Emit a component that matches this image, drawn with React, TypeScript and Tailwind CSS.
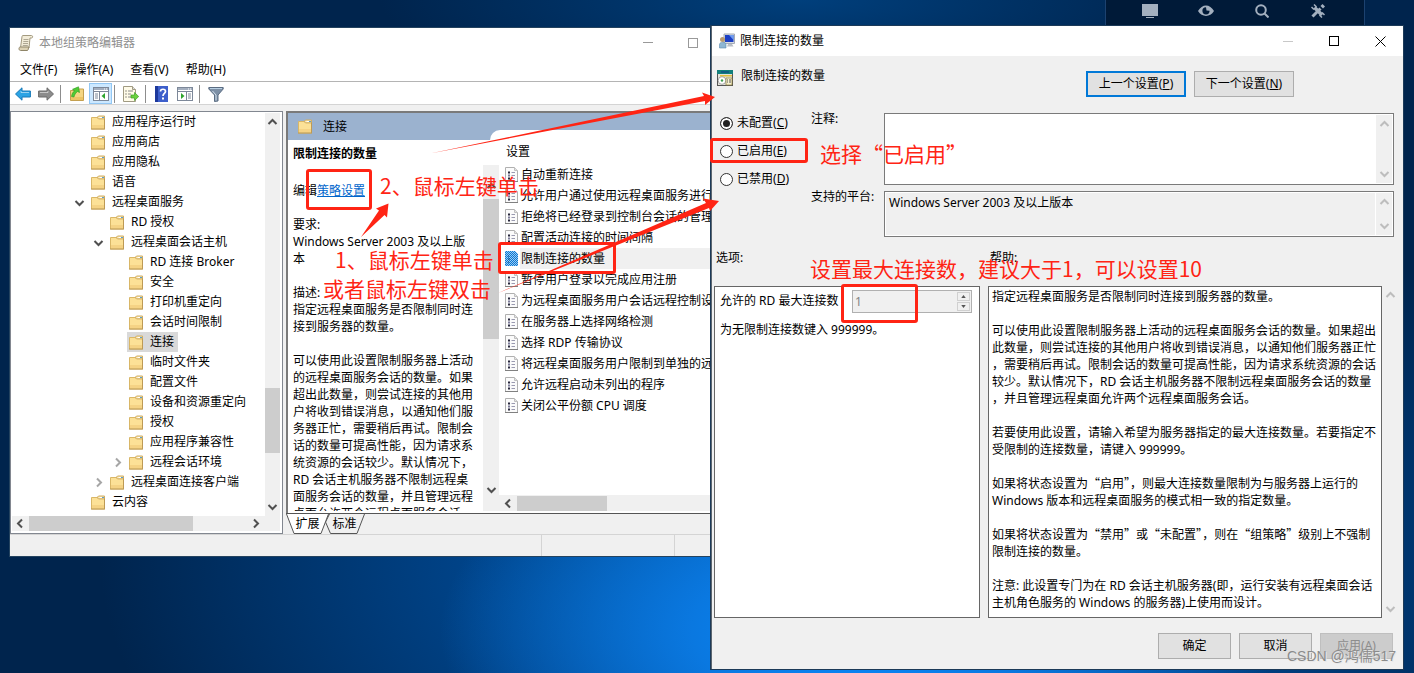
import type { ReactNode } from "react";
import clsx from "clsx";

type TreeNode = { name: string; level: 0 | 1 | 2; state?: "open" | "closed"; selected?: boolean };

const tree: TreeNode[] = [
  { name: "应用程序运行时", level: 0 },
  { name: "应用商店", level: 0 },
  { name: "应用隐私", level: 0 },
  { name: "语音", level: 0 },
  { name: "远程桌面服务", level: 0, state: "open" },
  { name: "RD 授权", level: 1 },
  { name: "远程桌面会话主机", level: 1, state: "open" },
  { name: "RD 连接 Broker", level: 2 },
  { name: "安全", level: 2 },
  { name: "打印机重定向", level: 2 },
  { name: "会话时间限制", level: 2 },
  { name: "连接", level: 2, selected: true },
  { name: "临时文件夹", level: 2 },
  { name: "配置文件", level: 2 },
  { name: "设备和资源重定向", level: 2 },
  { name: "授权", level: 2 },
  { name: "应用程序兼容性", level: 2 },
  { name: "远程会话环境", level: 2, state: "closed" },
  { name: "远程桌面连接客户端", level: 1, state: "closed" },
  { name: "云内容", level: 0 },
];

const indent = { 0: "pl-[60px]", 1: "pl-[79px]", 2: "pl-[98px]" };

const policies = [
  "自动重新连接",
  "允许用户通过使用远程桌面服务进行远程连接",
  "拒绝将已经登录到控制台会话的管理员注销",
  "配置活动连接的时间间隔",
  "限制连接的数量",
  "暂停用户登录以完成应用注册",
  "为远程桌面服务用户会话远程控制设置规则",
  "在服务器上选择网络检测",
  "选择 RDP 传输协议",
  "将远程桌面服务用户限制到单独的远程桌面服务会话",
  "允许远程启动未列出的程序",
  "关闭公平份额 CPU 调度",
];

const description = `要求:
Windows Server 2003 及以上版
本

描述:
指定远程桌面服务是否限制同时连
接到服务器的数量。

可以使用此设置限制服务器上活动
的远程桌面服务会话的数量。如果
超出此数量，则尝试连接的其他用
户将收到错误消息，以通知他们服
务器正忙，需要稍后再试。限制会
话的数量可提高性能，因为请求系
统资源的会话较少。默认情况下，
RD 会话主机服务器不限制远程桌
面服务会话的数量，并且管理远程
桌面允许两个远程桌面服务会话。`;

const help = `指定远程桌面服务是否限制同时连接到服务器的数量。

可以使用此设置限制服务器上活动的远程桌面服务会话的数量。如果超出
此数量，则尝试连接的其他用户将收到错误消息，以通知他们服务器正忙
，需要稍后再试。限制会话的数量可提高性能，因为请求系统资源的会话
较少。默认情况下，RD 会话主机服务器不限制远程桌面服务会话的数量
，并且管理远程桌面允许两个远程桌面服务会话。

若要使用此设置，请输入希望为服务器指定的最大连接数量。若要指定不
受限制的连接数量，请键入 999999。

如果将状态设置为“启用”，则最大连接数量限制为与服务器上运行的
Windows 版本和远程桌面服务的模式相一致的指定数量。

如果将状态设置为“禁用”或“未配置”，则在“组策略”级别上不强制
限制连接的数量。

注意: 此设置专门为在 RD 会话主机服务器(即，运行安装有远程桌面会话
主机角色服务的 Windows 的服务器)上使用而设计。`;

// Chinese quotes have to come from the CJK font, the latin one draws them too narrow
function Quoted({ text }: { text: string }) {
  return (
    <>
      {text.split(/([“”])/).map((part, i) =>
        part === "“" || part === "”" ? (
          <span key={i} className="font-['Noto_Sans_CJK_SC',sans-serif] leading-none">{part}</span>
        ) : part
      )}
    </>
  );
}

const arrowPaths = { up: "M1.5 7 5.5 3 9.5 7", down: "M1.5 4 5.5 8 9.5 4", left: "M7 1.5 3 5.5 7 9.5", right: "M4 1.5 8 5.5 4 9.5" };

function Arrow({ dir, className = "text-[#505050]" }: { dir: keyof typeof arrowPaths; className?: string }) {
  return (
    <svg viewBox="0 0 11 11" className={clsx("size-[11px] shrink-0", className)} fill="none" stroke="currentColor" strokeWidth="2">
      <path d={arrowPaths[dir]} />
    </svg>
  );
}

function Folder() {
  return (
    <svg viewBox="0 0 15 15" className="h-[15px] w-[15px] shrink-0">
      <path d="M6.500 4V2L7.500 1h6v3z" fill="#f7e3ae" stroke="#d0ad62" />
      <path d="M8.500 2.500h2.500" stroke="#fff" />
      <path d="M11 2.500h2" stroke="#5d9fc9" />
      <path d="M.5 2.500h5.500l1.500 1.500h6v10H.5z" fill="#fce197" stroke="#d9b768" />
      <path d="M1 10h12v3.500H1z" fill="#f5d385" />
      <path d="M13.500 3.500v10.500M0 14h14" stroke="#bd9a55" />
    </svg>
  );
}

function PolicyIcon({ selected }: { selected?: boolean }) {
  if (selected) {
    return (
      <svg viewBox="0 0 13 15" className="h-[15px] w-[13px] shrink-0">
        <defs>
          <pattern id="dither" width="2" height="2" patternUnits="userSpaceOnUse">
            <rect width="2" height="2" fill="#0878d6" />
            <rect width="1" height="1" fill="#9ecbf0" />
            <rect x="1" y="1" width="1" height="1" fill="#9ecbf0" />
          </pattern>
        </defs>
        <path d="M0 0h10l3 3v12H0z" fill="url(#dither)" />
        <path d="M3 5h1M3 8h2M3 11h1" stroke="#124a80" />
      </svg>
    );
  }
  return (
    <svg viewBox="0 0 13 15" className="h-[15px] w-[13px] shrink-0">
      <path d="M.5.5h9l3 3v11H.5z" fill="#fbfbfb" stroke="#b0b0b0" />
      <path d="M9.500.5v3h3" fill="#e4e4e4" stroke="#c0c0c0" />
      <path d="M0 14.500h13" stroke="#808080" />
      <path d="M3 5.500h2M3 11.500h2" stroke="#26263c" strokeWidth="2" />
      <path d="M3 8.500h2" stroke="#7a7a98" strokeWidth="2" />
      <path d="M6.500 5.500H10M6.500 8.500H10M6.500 11.500H10" stroke="#9a9ab0" />
    </svg>
  );
}

function ToolArrow({ flip, fill, edge }: { flip?: boolean; fill: string; edge: string }) {
  return (
    <svg viewBox="0 0 16 14" className="h-3.5 w-4 shrink-0">
      <path d={flip ? "M15.500 7 9 .8V4H.6v6H9v3.200z" : "M.5 7 7 .8V4h8.400v6H7v3.200z"} fill={fill} stroke={edge} />
      <path d={flip ? "M2 5.500h8V4" : "M14 5.500H6V4"} fill="none" stroke="#fff" strokeOpacity=".5" />
    </svg>
  );
}

function PaneIcon({ right }: { right?: boolean }) {
  return (
    <svg viewBox="0 0 16 14" className="h-3.5 w-4">
      <rect x=".5" y=".5" width="15" height="13" fill="#fff" stroke="#7d8899" />
      <path d="M1 2h14" stroke="#a4afbf" strokeWidth="2" />
      <path d="M11 2h1m1 0h1" stroke="#fff" />
      <path d="M1 4.500h14" stroke="#7d8899" />
      {right ? (
        <>
          <path d="M9.500 5v8" stroke="#7d8899" />
          <path d="M11 7h3M11 9h3M11 11h3" stroke="#7d8899" />
          <path d="M4 6 7.500 9 4 12z" fill="#2fa52d" />
        </>
      ) : (
        <>
          <path d="M6.500 5v8" stroke="#7d8899" />
          <path d="M2 7h3M2 9h3M2 11h3" stroke="#7d8899" />
          <path d="M12 6 8.500 9l3.500 3z" fill="#2fa52d" />
        </>
      )}
    </svg>
  );
}

function Toolbar() {
  const sep = <span className="h-[18px] w-px bg-[#8d8d8d]" />;
  return (
    <div className="flex h-[23px] items-center border-b border-[#d4d4d4] pl-[5px] pt-px">
      <button aria-label="后退"><ToolArrow fill="#2ba3e4" edge="#1779b8" /></button>
      <button aria-label="前进" className="ml-[7px] mr-1.5"><ToolArrow flip fill="#8c8c8c" edge="#6b6b6b" /></button>
      {sep}
      <button aria-label="上一级" className="ml-2">
        <svg viewBox="0 0 16 16" className="size-4">
          <path d="M1.500 4.500h6L9 3h5.500v11.500h-13z" fill="#f5d683" stroke="#c4a050" />
          <path d="M2 11h12v3H2z" fill="#edc566" />
          <path d="M2.500 10.500C3 7.500 4 6 5.500 4.800L3.500 3.300 9.500.8 10.500 6.500 8.500 5.500C7 7 5.500 8 5 11z" fill="#4fcb35" stroke="#2b9a1e" strokeWidth=".6" />
        </svg>
      </button>
      <button aria-label="显示控制台树" className="ml-1 mr-0.5 flex h-[21px] w-[23px] items-center justify-center border border-[#92c7f4] bg-[#cce8ff]"><PaneIcon /></button>
      {sep}
      <button aria-label="导出列表" className="ml-2 mr-1.5">
        <svg viewBox="0 0 16 16" className="size-4">
          <path d="M.5.5h9l3 3v12H.5z" fill="#fffbe8" stroke="#a09a82" />
          <path d="M9.500.5v3h3" fill="#ddd" stroke="#a09a82" />
          <path d="M2.500 5h1m-1 3h1m-1 3h1" stroke="#333" />
          <path d="M5 5h5M5 8h3M5 11h3" stroke="#8a8a8a" />
          <path d="M8 9h3.500V6.500l4.200 4-4.200 4V12H8z" fill="#6bd13f" stroke="#3da326" strokeWidth=".7" />
        </svg>
      </button>
      {sep}
      <button aria-label="帮助" className="ml-2 mr-[7px]">
        <svg viewBox="0 0 16 16" className="size-4">
          <path d="M1 0h13v16H1z" fill="#3d5fcb" />
          <path d="M1 0h3v16H1z" fill="#1d389b" />
          <path d="M6.500 5.500C6.500 2.500 11.500 2.500 11.500 5.500 11.500 7.500 9 7.500 9 10" fill="none" stroke="#fff" strokeWidth="1.700" />
          <path d="M8 11.500h2v2H8z" fill="#fff" />
        </svg>
      </button>
      <button aria-label="显示操作窗格" className="mr-1.5"><PaneIcon right /></button>
      {sep}
      <button aria-label="筛选器" className="ml-2">
        <svg viewBox="0 0 16 16" className="size-4">
          <path d="M.8 1.500h14.400v1.500L10 9v6l-3.500.5V9L.8 3z" fill="#7d90a6" stroke="#5a6c82" />
          <path d="M2 2.500h12" stroke="#b9d0e4" />
          <path d="M4.500 5 8 9v5.500" fill="none" stroke="#d5e2ee" />
        </svg>
      </button>
    </div>
  );
}

function ConsoleTree() {
  return (
    <div className="flex w-[273px] flex-col border border-[#828790] bg-white">
      <div className="flex flex-1">
        <ul className="flex-1">
          {tree.map(n => (
            <li key={n.name} className={clsx("flex h-5 items-center whitespace-nowrap", indent[n.level])}>
              <span className="mr-0.5 flex w-4 justify-center">
                {n.state === "open" && <Arrow dir="down" />}
                {n.state === "closed" && <Arrow dir="right" className="text-[#a6a6a6]" />}
              </span>
              <span className={clsx("flex h-5 items-center gap-1.5 pl-0.5 pr-1", n.selected && "bg-[#d9d9d9]")}>
                <Folder />
                <span className="leading-[18px]">{n.name}</span>
              </span>
            </li>
          ))}
        </ul>
        <div className="mr-0.5 mt-px flex w-[15px] flex-col items-center bg-[#f0f0f0]">
          <Arrow dir="up" className="mt-1 text-[#505050]" />
          <span className="mt-[260px] h-[65px] w-full bg-[#cdcdcd]" />
          <Arrow dir="down" className="mb-1 mt-auto text-[#505050]" />
        </div>
      </div>
      <div className="mb-0.5 mr-0.5 ml-px flex h-[15px] items-center bg-[#f0f0f0] pl-[3px]">
        <Arrow dir="left" />
        <span className="ml-[3px] h-[15px] w-[164px] bg-[#cdcdcd]" />
        <Arrow dir="right" className="ml-auto mr-[19px] text-[#505050]" />
      </div>
    </div>
  );
}

function ExtendedView() {
  return (
    <div className="flex h-[402px] flex-col border-l-2 border-t-2 border-[#7a7a7a] bg-white pb-0.5">
      <div className="flex h-[27px] bg-[#9bb2cf]">
        <div className="flex w-[202px] items-center gap-2.5 pl-2.5">
          <Folder />
          连接
        </div>
        <span className="h-2.5 flex-1 self-end rounded-tl-[10px] bg-white" />
      </div>
      <div className="flex min-h-0 flex-1">
        <div className="flex w-[211px] flex-col">
          <h2 className="h-[25px] pl-[5px] font-bold leading-[27px]">限制连接的数量</h2>
          <div className="flex min-h-0 flex-1">
            <div className="flex-1 overflow-hidden whitespace-pre pl-[5px] pt-[17px] leading-[17px]">
              <p className="mb-[17px]">编辑<a href="#policy" className="text-[#0066cc] underline">策略设置</a></p>
              <p>{description}</p>
            </div>
            <div className="flex w-4 flex-col items-center bg-[#f0f0f0]">
              <Arrow dir="up" className="mt-4 text-[#505050]" />
              <span className="mt-[7px] h-[140px] w-full bg-[#cdcdcd]" />
              <Arrow dir="down" className="mb-4 mt-auto text-[#505050]" />
            </div>
          </div>
        </div>
        <div className="flex min-w-0 flex-1 flex-col">
          <h3 className="h-6 pl-[7px] leading-6">设置</h3>
          <ul className="flex-1 whitespace-nowrap">
            {policies.map((p, i) => (
              <li key={p} className="flex h-[21px] items-center gap-0.5 pl-1.5">
                <PolicyIcon selected={i === 4} />
                <span className={clsx("h-[21px] flex-1 overflow-hidden pl-px leading-[21px]", i === 4 && "bg-[#f0f0f0]")}>{p}</span>
              </li>
            ))}
          </ul>
          <div className="flex h-4 items-center bg-[#f0f0f0] pl-1">
            <Arrow dir="left" />
            <span className="ml-[3px] h-[15px] w-[90px] bg-[#cdcdcd]" />
          </div>
        </div>
      </div>
    </div>
  );
}

function ViewTab({ label, active }: { label: string; active?: boolean }) {
  return (
    <button className={clsx("relative h-5 w-[43px] leading-5", active ? "z-10" : "-ml-1.5")}>
      <svg viewBox="0 0 43 20" className="absolute inset-0 h-5 w-[43px]">
        <path d={active ? "M.5 0 8 19.500H35L42.500 0" : "M6.500 0 2.500 8 7.500 19.500H34L41.500 0"} fill={active ? "#fff" : "#f0f0f0"} stroke="#555" />
      </svg>
      <span className="relative">{label}</span>
    </button>
  );
}

function EditorWindow() {
  return (
    <section className="absolute left-[10px] top-7 w-[750px] bg-[#f0f0f0] ring-1 ring-[#24435f]">
      <div className="bg-white">
        <header className="flex h-[29px] items-center pl-2">
          <svg viewBox="0 0 16 16" className="size-4">
            <path d="M4 1.500C4 .8 4.500.5 5 .5h8.500c1.500 0 1.500 2.500 0 2.500H12L11 13H2.500z" fill="#f2ecd8" stroke="#a39a80" />
            <path d="M1 13.500C1 12 2 12 3 12h8c-1 1.500-.5 3-1.500 3.500H2.500C1.500 15.500 1 14.800 1 13.500z" fill="#ddd2b4" stroke="#8f8568" />
            <path d="M5.500 4.500h5M5.300 6.500h5M5 8.500h5M4.800 10.500h5" stroke="#9c9681" strokeWidth=".8" />
          </svg>
          <h1 className="ml-[5px] flex-1 text-[#8f8f8f]">本地组策略编辑器</h1>
          <button aria-label="最小化" className="flex w-[45px] justify-center"><span className="h-px w-2.5 bg-[#999]" /></button>
          <button aria-label="最大化" className="flex w-[45px] justify-center"><span className="size-2.5 border border-[#999]" /></button>
          <button aria-label="关闭" className="flex w-[45px] justify-center text-[#999]">✕</button>
        </header>
        <nav className="flex h-[25px] items-center gap-[17px] border-b border-[#b4b4b4] pl-2.5 pt-0.5">
          {["文件(F)", "操作(A)", "查看(V)", "帮助(H)"].map(m => <button key={m}>{m}</button>)}
        </nav>
        <Toolbar />
      </div>
      <div className="mt-1.5 flex h-[423px] gap-[3px]">
        <ConsoleTree />
        <div className="flex min-w-0 flex-1 flex-col">
          <ExtendedView />
          <div className="flex border-t border-[#555]">
            <ViewTab label="扩展" active />
            <ViewTab label="标准" />
          </div>
        </div>
      </div>
      <footer className="flex h-[22px] border-t border-[#d4d4d4]">
        <span className="w-[532px] border-r border-[#d4d4d4]" />
        <span className="w-[133px] border-r border-[#d4d4d4]" />
      </footer>
    </section>
  );
}

function SideScroll({ className }: { className?: string }) {
  return (
    <div className={clsx("flex w-4 shrink-0 flex-col items-center justify-between bg-[#f0f0f0] py-1", className)}>
      <Arrow dir="up" className="text-[#bdbdbd]" />
      <Arrow dir="down" className="text-[#bdbdbd]" />
    </div>
  );
}

function StateRadio({ label, hotkey, checked }: { label: string; hotkey: string; checked?: boolean }) {
  return (
    <label className="flex h-5 items-center gap-1">
      <input type="radio" name="state" defaultChecked={checked} className="size-[13px] appearance-none rounded-full border border-[#333] bg-white checked:bg-[#222] checked:shadow-[inset_0_0_0_2px_#fff]" />
      <span className="leading-[18px]">{label}(<u>{hotkey}</u>)</span>
    </label>
  );
}

function DialogButton({ children, className = "w-[73px] border border-[#adadad] bg-[#e1e1e1]", disabled }: { children: ReactNode; className?: string; disabled?: boolean }) {
  return <button disabled={disabled} className={clsx("h-[26px]", className)}>{children}</button>;
}

function PolicyDialog() {
  return (
    <section className="absolute left-[711px] top-[26px] w-[692px] border-l border-[#5c6670] bg-[#f0f0f0] ring-1 ring-[#1c3a58]">
      <header className="flex h-[30px] items-center bg-white pl-[7px]">
        <svg viewBox="0 0 16 16" className="size-4">
          <path d="M5 1h10.500v9.500H5z" fill="#d9dde3" stroke="#a5abb5" />
          <path d="M6 2h8.500v7H6z" fill="#1c3fc4" />
          <path d="M10 2h4.500v5z" fill="#6f9cf0" />
          <path d="M9 11h4l1.500 2.500H8z" fill="#b9bec6" />
          <circle cx="3.500" cy="6.500" r="2.500" fill="#b99a70" />
          <path d="M.5 15V11.500C.5 8.500 7 8.500 7 11.500V15z" fill="#8eb6d3" stroke="#5d8cae" strokeWidth=".6" />
        </svg>
        <h1 className="ml-[5px] flex-1">限制连接的数量</h1>
        <button aria-label="最小化" className="flex w-[46px] justify-center"><span className="h-px w-2.5 bg-[#c8c8c8]" /></button>
        <button aria-label="最大化" className="flex w-[46px] justify-center"><span className="size-2.5 border border-black" /></button>
        <button aria-label="关闭" className="flex w-[46px] justify-center">
          <svg viewBox="0 0 11 11" className="size-[11px]" stroke="#000"><path d="M.5.5l10 10M10.500.5l-10 10" /></svg>
        </button>
      </header>

      <div className="flex h-[57px] items-start pl-[5px]">
        <svg viewBox="0 0 16 16" className="mt-3.5 size-4">
          <rect x=".5" y=".5" width="15" height="15" fill="#e3e3da" stroke="#555" />
          <path d="M0 0h16v4H0z" fill="#11807c" />
          <path d="M4 2h8" stroke="#123c8c" />
          <path d="M3 5h12v1.500H3z" fill="#e0bf3c" />
          <circle cx="5" cy="10.500" r="3.800" fill="#fff" stroke="#888" strokeWidth=".7" />
          <circle cx="5" cy="10.500" r="1.200" fill="#3f9e50" />
          <path d="M9 8h6v7H9z" fill="#f7f1cf" stroke="#8b7c3a" strokeWidth=".7" />
          <path d="M10 10h1m1 0h2m-4 2h1m1 0h2" stroke="#555" />
        </svg>
        <h2 className="ml-2 mt-3 flex-1 leading-4">限制连接的数量</h2>
        <div className="mr-[109px] mt-[15px] flex gap-2">
          <DialogButton className="w-[100px] border-2 border-[#0078d7] bg-[#e1e1e1]">上一个设置(<u>P</u>)</DialogButton>
          <DialogButton className="w-[100px] border border-[#adadad] bg-[#e1e1e1]">下一个设置(<u>N</u>)</DialogButton>
        </div>
      </div>

      <div className="grid grid-cols-[99px_73px_1fr] grid-rows-[72px_46px] gap-y-1.5 pr-[9px]">
        <fieldset className="row-span-2 flex flex-col gap-2 pl-2">
          <StateRadio label="未配置" hotkey="C" checked />
          <StateRadio label="已启用" hotkey="E" />
          <StateRadio label="已禁用" hotkey="D" />
        </fieldset>
        <label htmlFor="comment" className="leading-3">注释:</label>
        <div className="flex border border-[#7a7a7a] bg-white p-px">
          <textarea id="comment" className="min-w-0 flex-1 resize-none outline-none" />
          <SideScroll />
        </div>
        <label htmlFor="platform" className="leading-3">支持的平台:</label>
        <div className="flex border border-[#7a7a7a] bg-white p-px">
          <textarea id="platform" readOnly defaultValue="Windows Server 2003 及以上版本" className="mr-px min-w-0 flex-1 resize-none overflow-hidden bg-[#f0f0f0] pl-[3px] pt-px leading-[17px] outline-none" />
          <SideScroll />
        </div>
      </div>

      <div className="flex h-[49px] pl-1 pt-[13px] leading-4">
        <h3 className="w-[274px]">选项:</h3>
        <h3>帮助:</h3>
      </div>

      <div className="flex h-[332px] pl-0.5 pr-[5px]">
        <div className="w-[266px] border border-[#666] bg-white pl-[5px] pt-[3px]">
          <div className="flex items-center">
            <label htmlFor="limit" className="w-[132px] whitespace-nowrap pb-0.5">允许的 RD 最大连接数</label>
            <div className="flex h-[23px] w-[120px] border border-[#b0b0b0] bg-[#f0f0f0]">
              <input id="limit" disabled defaultValue="1" className="min-w-0 flex-1 pl-0.5 text-[#858585]" />
              <span className="m-px flex w-[13px] flex-col gap-px text-[#555]">
                <button aria-label="增加" disabled className="flex flex-1 items-center justify-center border border-[#d0d0d0]">
                  <svg viewBox="0 0 6 4" className="h-[3px] w-[5px]" fill="currentColor"><path d="M3 0 6 4H0z" /></svg>
                </button>
                <button aria-label="减少" disabled className="flex flex-1 items-center justify-center border border-[#d0d0d0]">
                  <svg viewBox="0 0 6 4" className="h-[3px] w-[5px]" fill="currentColor"><path d="M3 4 0 0h6z" /></svg>
                </button>
              </span>
            </div>
          </div>
          <p className="mt-2 leading-[17px]">为无限制连接数键入 999999。</p>
        </div>
        <div className="ml-2 flex-1 overflow-hidden whitespace-pre border border-[#666] bg-white pl-[3px] pt-px leading-[17px]">
          <Quoted text={help} />
        </div>
        <SideScroll />
      </div>

      <footer className="flex justify-end gap-2 pb-2.5 pr-2.5 pt-[15px]">
        <DialogButton>确定</DialogButton>
        <DialogButton>取消</DialogButton>
        <DialogButton disabled className="w-[73px] border border-[#bfbfbf] bg-[#cccccc] text-[#8d8d8d]">应用(A)</DialogButton>
      </footer>
    </section>
  );
}

function Marks() {
  const note = "absolute whitespace-nowrap text-[21px] leading-[26px]";
  const box = "absolute rounded-[3px] border-3";
  return (
    <div className="pointer-events-none absolute inset-0 border-[#ff2414] font-['Noto_Sans_CJK_SC',sans-serif] text-[#ff2414]">
      <span className={clsx(box, "left-[306px] top-[169px] h-[41px] w-[66px]")} />
      <span className={clsx(box, "left-[498px] top-[242px] h-[32px] w-[118px]")} />
      <span className={clsx(box, "left-[710px] top-[138px] h-[25px] w-[98px]")} />
      <span className={clsx(box, "left-[841px] top-[284px] h-[39px] w-[77px]")} />
      <svg viewBox="0 0 1414 673" className="absolute left-0 top-0 h-[673px] w-[1414px]" fill="currentColor">
        <path d="M430 153.500 704 96 702 92.500 715 97 705 105 705 101z" />
        <path d="M498 293 706 203 703 198.500 719 201 710 211 709 208z" />
        <path d="M361 237 379 210.500 376 208.500 388.500 203.500 387 217.500 384.500 215z" />
      </svg>
      <p className={clsx(note, "left-[380px] top-[172px]")}>2、鼠标左键单击</p>
      <p className={clsx(note, "left-[335px] top-[246px]")}>1、鼠标左键单击</p>
      <p className={clsx(note, "left-[323px] top-[275px]")}>或者鼠标左键双击</p>
      <p className={clsx(note, "left-[820px] top-[140px]")}>选择“已启用”</p>
      <p className={clsx(note, "left-[810px] top-[255px]")}>设置最大连接数，建议大于1，可以设置10</p>
    </div>
  );
}

function DesktopBar() {
  return (
    <div className="absolute left-[1105px] top-0 flex h-[26px] w-[260px] border-x border-[#1c4270] bg-[#001a38] pl-4 text-[#a3b0bf]">
      <button aria-label="显示" className="flex h-[22px] w-14 items-center justify-center">
        <svg viewBox="0 0 16 14" className="h-3.5 w-4" fill="currentColor"><path d="M0 0h16v12H0zM4 13h8v1H4z" /></svg>
      </button>
      <button aria-label="查看" className="flex h-[22px] w-14 items-center justify-center">
        <svg viewBox="0 0 16 12" className="h-3 w-4" fill="currentColor" fillRule="evenodd"><path d="M0 6C4-1.500 12-1.500 16 6 12 12.500 4 12.500 0 6zM8 2.200a3.600 3.600 0 1 0 3.600 3.600L8.500 5.500z" /></svg>
      </button>
      <button aria-label="搜索" className="flex h-[22px] w-14 items-center justify-center">
        <svg viewBox="0 0 14 14" className="size-3.5" fill="none" stroke="currentColor" strokeWidth="2"><circle cx="6" cy="6" r="4.800" /><path d="M9.500 9.500l4 4" /></svg>
      </button>
      <button aria-label="工具" className="flex h-[22px] w-14 items-center justify-center">
        <svg viewBox="0 0 14 14" className="size-3.5" fill="none" stroke="currentColor">
          <path d="M3.500 3.500l7.500 7.500" strokeWidth="3.500" />
          <path d="M9.500 4.500 1.500 12.500" strokeWidth="3" />
          <path d="M10.500 1 13 3.500" strokeWidth="2.800" />
          <path d="M.5 3 3 5.500M3 .5 5.500 3M11 8.500l2.500 2.500M8.500 11l2.500 2.500" strokeWidth="1.500" />
        </svg>
      </button>
    </div>
  );
}

export default function App() {
  return (
    <main className="relative h-screen min-h-[673px] overflow-hidden bg-[#00244d] bg-[radial-gradient(ellipse_420px_210px_at_860px_630px,#0a8bff_0%,#0a78e0_40%,#0058ad00_100%),radial-gradient(ellipse_760px_420px_at_860px_560px,#0060b8_0%,#00448a_50%,#00244d00_100%),radial-gradient(ellipse_420px_90px_at_800px_0px,#003f7c_0%,#00244d00_100%)] font-['Noto_Sans','Noto_Sans_CJK_SC',sans-serif] text-[12px] leading-4 text-black">
      <DesktopBar />
      <EditorWindow />
      <PolicyDialog />
      <Marks />
      <p className="absolute left-[1287px] top-[647px] whitespace-nowrap font-['Liberation_Sans','Noto_Sans_CJK_SC',sans-serif] text-[14px] leading-[18px] text-[#8b8b8b] [text-shadow:1px_1px_0_#e8e8e8]">CSDN @鸿儒517</p>
    </main>
  );
}
